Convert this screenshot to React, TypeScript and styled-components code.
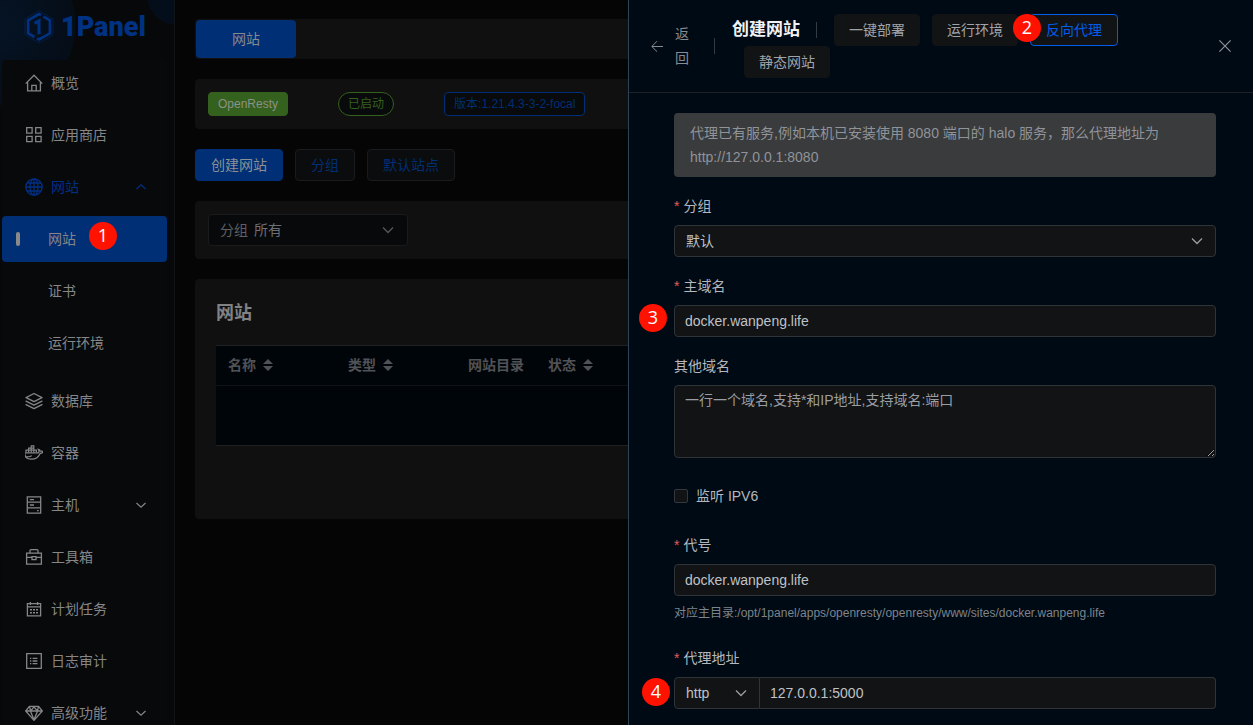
import React from "react";
import styled, { createGlobalStyle, css } from "styled-components";

const GlobalStyle = createGlobalStyle`
  *, *::before, *::after { box-sizing: border-box; }
  body {
    margin: 0;
    background: #050505;
    overflow: hidden;
  }
  body, button, input, select, textarea {
    font-family: "Liberation Sans", "Noto Sans CJK SC", sans-serif;
    font-size: 14px;
    line-height: 22px;
  }
  button { cursor: pointer; }
`;

const Page = styled.div`
  display: flex;
  height: 100vh;
  overflow: hidden;
`;

/* ---------- sidebar ---------- */

const Sidebar = styled.aside`
  flex: 0 0 175px;
  overflow: hidden;
  border-right: 1px solid #121417;
  background:
    radial-gradient(circle at 176px -4px, #040e1b 0 28px, transparent 29px),
    radial-gradient(circle at -5px 25px, #051426 0, #050d17 80px, transparent 81px),
    #070809;
`;

const Brand = styled.a`
  display: flex;
  align-items: center;
  gap: 7px;
  height: 60px;
  padding: 0 0 6px 24px;
  color: #003283;
  font-family: Roboto, "Liberation Sans", sans-serif;
  font-size: 27px;
  font-weight: 900;
  line-height: 32px;
  text-decoration: none;
`;

const Menu = styled.nav`
  display: flex;
  flex-direction: column;
  gap: 6px;
  margin: 0 7px 0 2px;
  background: #08090b;
  border-radius: 4px;
`;

const SubMenu = styled.div`
  display: flex;
  flex-direction: column;
  gap: 6px;
  margin-bottom: 6px;
`;

const MenuLink = styled.a<{ $open?: boolean }>`
  display: flex;
  align-items: center;
  gap: 8px;
  height: 46px;
  padding: 0 20px 0 23px;
  color: ${(p) => (p.$open ? "#002f84" : "#858687")};
  text-decoration: none;

  svg { flex: none; }
  span { flex: 1; }
`;

const SubLink = styled.a<{ $active?: boolean }>`
  position: relative;
  display: flex;
  align-items: center;
  height: 46px;
  padding-left: 46px;
  border-radius: 4px;
  color: #858687;
  text-decoration: none;

  ${(p) =>
    p.$active &&
    css`
      background: #002f75;
      &::before {
        content: "";
        position: absolute;
        left: 14px;
        width: 4px;
        height: 14px;
        border-radius: 2px;
        background: #8a8a8a;
      }
    `}
`;

const StepBadge = styled.span<{ $left: number; $top: number }>`
  position: absolute;
  left: ${(p) => p.$left}px;
  top: ${(p) => p.$top}px;
  z-index: 1;
  width: 28px;
  height: 28px;
  border-radius: 50%;
  background: #ff1200;
  color: #fff;
  font-family: "Open Sans", sans-serif;
  font-size: 18px;
  line-height: 27px;
  text-align: center;
`;

/* ---------- main area ---------- */

const Main = styled.main`
  flex: 1;
  display: flex;
  flex-direction: column;
  align-items: stretch;
  gap: 20px;
  min-width: 0;
  padding: 19px 20px;
`;

const TabBar = styled.div`
  display: flex;
  padding: 1px;
  border-radius: 4px;
  background: #101010;
`;

const MainTab = styled.button`
  width: 100px;
  height: 38px;
  border: 0;
  border-radius: 4px;
  background: #002f75;
  color: #878a90;
`;

const Card = styled.section`
  border-radius: 4px;
  background: #101010;
`;

const StatusCard = styled(Card)`
  display: flex;
  gap: 50px;
  padding: 13px;
`;

const Tag = styled.span<{ $tone: "solid" | "success" | "primary" }>`
  height: 24px;
  padding: 0 9px;
  border: 1px solid;
  border-radius: ${(p) => (p.$tone === "success" ? 12 : 4)}px;
  font-size: 12px;
  line-height: 22px;
  ${(p) =>
    p.$tone === "solid"
      ? "background: #34611d; border-color: #34611d; color: #8d9088;"
      : p.$tone === "success"
        ? "background: #080a0b; border-color: #34611d; color: #34611d;"
        : "background: #080a0b; border-color: #002f75; color: #002f75;"}
`;

const Actions = styled.div`
  display: flex;
  gap: 12px;
`;

const ActionButton = styled.button<{ $primary?: boolean }>`
  height: 32px;
  padding: 0 15px;
  border: 1px solid ${(p) => (p.$primary ? "#002f75" : "#1a1b1d")};
  border-radius: 4px;
  background: ${(p) => (p.$primary ? "#002f75" : "#0b0c0e")};
  color: ${(p) => (p.$primary ? "#8d9094" : "#002f75")};
`;

const FilterCard = styled(Card)`
  padding: 13px;
`;

const Filter = styled.div`
  position: relative;
  display: flex;
  align-items: center;
  gap: 6px;
  width: 200px;
  height: 32px;
  padding-left: 11px;
  border: 1px solid #1a1b1d;
  border-radius: 4px;
  background: #08090b;
  color: #5e6064;
`;

const TableCard = styled(Card)`
  padding: 22px 21px 73px;
`;

const CardTitle = styled.h2`
  margin: 0 0 20px;
  color: #808284;
  font-size: 18px;
  font-weight: 700;
  line-height: 24px;
`;

const Table = styled.table`
  width: 100%;
  table-layout: fixed;
  border-collapse: collapse;
  border-top: 1px solid #202122;
  border-bottom: 1px solid #202122;
  background: #000509;

  th {
    height: 40px;
    padding: 0 12px 2px;
    border-bottom: 1px solid #101214;
    color: #515256;
    font-size: 14px;
    font-weight: 700;
    line-height: 22px;
    text-align: left;
    white-space: nowrap;
  }
  th:nth-child(-n + 2) { width: 120px; }
  th:nth-child(3) { width: 80px; padding-right: 0; }
  th svg { margin-left: 7px; vertical-align: -1px; }
  td { height: 60px; padding: 0; }
`;

/* ---------- drawer ---------- */

const Drawer = styled.section`
  position: fixed;
  top: 0;
  right: 0;
  bottom: 0;
  width: round(down, 50%, 5px);
  overflow: hidden;
  border-left: 1px solid #2b4354;
  background: #000a14;
  color: #b4b8be;
`;

const DrawerHeader = styled.header`
  display: flex;
  align-items: center;
  padding: 14px 22px;
  border-bottom: 1px solid #1c2125;
`;

const BackButton = styled.button`
  display: flex;
  align-items: center;
  gap: 12px;
  padding: 0;
  border: 0;
  background: none;
  color: #878b90;
  line-height: 24px;

  span { width: 14px; }
`;

const Divider = styled.i<{ $title?: boolean }>`
  flex: none;
  width: 1px;
  height: 16px;
  margin: ${(p) => (p.$title ? "0 5px 0 16px" : "0 17px 0 25px")};
  background: #343b42;
`;

const HeaderContent = styled.div`
  flex: 1;
  display: flex;
  flex-wrap: wrap;
  align-items: center;
`;

const DrawerTitle = styled.h1`
  margin: 0;
  color: #f0f2f4;
  font-size: 17px;
  font-weight: 600;
  line-height: 28px;
`;

const TypeButton = styled.button<{ $active?: boolean }>`
  position: relative;
  height: 32px;
  margin-left: 12px;
  padding: 0 ${(p) => (p.$active ? 15 : 14)}px;
  border: 1px solid ${(p) => (p.$active ? "#005eeb" : "#111314")};
  border-radius: 4px;
  background: #111314;
  color: ${(p) => (p.$active ? "#005eeb" : "#a0a3a8")};
`;

const CloseButton = styled.button`
  display: flex;
  margin-left: 20px;
  padding: 0;
  border: 0;
  background: none;
  color: #8d9197;
`;

const Form = styled.form`
  display: flex;
  flex-direction: column;
  gap: 18px;
  padding: 20px 37px 20px 45px;
`;

const Alert = styled.p`
  margin: 0;
  padding: 8px 16px;
  border-radius: 4px;
  background: #393b3c;
  color: #909399;
  line-height: 24px;
`;

const Field = styled.div`
  display: flex;
  flex-direction: column;
  gap: 8px;
`;

const Label = styled.label<{ $required?: boolean }>`
  line-height: 22px;
  ${(p) =>
    p.$required &&
    css`
      &::before {
        content: "*";
        margin-right: 4px;
        color: #e05c5c;
      }
    `}
`;

const Control = styled.div`
  position: relative;
  display: flex;
`;

const field = css`
  width: 100%;
  min-width: 0;
  margin: 0;
  border: 1px solid #303438;
  border-radius: 4px;
  background: #111314;
  color: #bfc2c7;
  outline: none;
`;

const Input = styled.input<{ $joined?: boolean }>`
  ${field}
  height: 32px;
  padding: 0 10px;
  ${(p) =>
    p.$joined &&
    css`
      border-left: 0;
      border-radius: 0 4px 4px 0;
    `}
`;

const Textarea = styled.textarea`
  ${field}
  height: 73px;
  padding: 4px 10px;
  line-height: 21px;
  resize: vertical;
  color-scheme: dark;
  &::placeholder { color: #9a9ea4; }
`;

const Select = styled.select<{ $joined?: boolean }>`
  ${field}
  height: 32px;
  padding: 0 11px;
  appearance: none;
  ${(p) => p.$joined && "border-radius: 4px 0 0 4px;"}
`;

const FilterSelect = styled.select`
  flex: 1;
  height: 30px;
  padding: 0;
  border: 0;
  background: none;
  color: #6c6f74;
  appearance: none;
  outline: none;
`;

const SelectBox = styled.div<{ $compact?: boolean }>`
  position: relative;
  display: flex;
  flex: ${(p) => (p.$compact ? "0 0 86px" : "1")};
`;

const Caret = styled.svg`
  position: absolute;
  right: 13px;
  top: 50%;
  margin-top: -6px;
  pointer-events: none;
`;

const Hint = styled.small`
  margin-top: -8px;
  padding: 5px 0 4px;
  color: #7d848b;
  font-size: 12px;
  line-height: 24px;
`;

const CheckRow = styled.label`
  display: flex;
  align-items: center;
  gap: 8px;
  height: 40px;
`;

const Checkbox = styled.input`
  width: 14px;
  height: 14px;
  margin: 0;
  border: 1px solid #34383c;
  border-radius: 2px;
  background: #111314;
  appearance: none;
`;

/* ---------- icons ---------- */

const Icon = ({ children }: { children: React.ReactNode }) => (
  <svg width="18" height="18" viewBox="0 0 18 18" fill="none" stroke="currentColor" strokeWidth="1.3" aria-hidden="true">
    {children}
  </svg>
);

const Chevron = ({ up }: { up?: boolean }) => (
  <svg width="12" height="12" viewBox="0 0 12 12" fill="none" stroke="currentColor" strokeWidth="1.2" aria-hidden="true">
    <path d={up ? "M1.5 8 6 3.8 10.5 8" : "M1.5 4 6 8.2 10.5 4"} />
  </svg>
);

const SelectCaret = ({ color = "#9a9ea4" }: { color?: string }) => (
  <Caret width="12" height="12" viewBox="0 0 12 12" fill="none" stroke={color} strokeWidth="1.3" aria-hidden="true">
    <path d="M1 3.5 6 8.5 11 3.5" />
  </Caret>
);

const SortIcon = () => (
  <svg width="10" height="12" viewBox="0 0 10 12" fill="currentColor" aria-hidden="true">
    <path d="M0 5 5 0 10 5ZM0 7H10L5 12Z" />
  </svg>
);

const LogoMark = () => (
  <svg width="30" height="34" viewBox="0 0 30 34" fill="none" stroke="#003283" aria-hidden="true">
    <path d="M15 .8 29 8.8V24.8L15 32.8 1 24.8V8.8Z" strokeWidth="1" opacity=".4" />
    <path d="M17 5.2 15 4.1 4.1 10.3V23.3L10.5 27" strokeWidth="2.6" />
    <path d="M13 28.4 15 29.5 25.9 23.3V10.3L19.5 6.6" strokeWidth="2.6" />
    <path d="M10.5 13.4 15 10.8V24.2" strokeWidth="3" />
  </svg>
);

const icons = {
  home: (
    <Icon>
      <path d="M.7 9.6 9 1.2 17.3 9.6M2.6 8.2V16.8H15.4V8.2M6.8 16.5V11.3H11.2V16.5" />
    </Icon>
  ),
  apps: (
    <Icon>
      <path d="M1.7 1.7H7.1V7.1H1.7ZM10.7 1.7H16.1V7.1H10.7ZM1.7 10.3H7.1V15.7H1.7ZM10.7 10.3H16.1V15.7H10.7Z" />
    </Icon>
  ),
  globe: (
    <Icon>
      <circle cx="9" cy="9" r="8.2" />
      <ellipse cx="9" cy="9" rx="4" ry="8.2" />
      <path d="M9 .8V17.2M.8 9H17.2M2 5H16M2 13H16" />
    </Icon>
  ),
  layers: (
    <Icon>
      <path d="M9 1.5 17 5.6 9 9.7 1 5.6ZM1 9.2 9 13.2 17 9.2M1 12.6 9 16.6 17 12.6" strokeLinejoin="round" strokeLinecap="round" />
    </Icon>
  ),
  docker: (
    <Icon>
      <svg x="-1" y="0" width="20" height="18" viewBox="0 0 20 18" overflow="visible" strokeWidth="1.2">
        <path d="M.6 8.8H14.4C15.2 8 15 6.4 14.4 5.4 15.8 5.8 16.2 6.6 16.4 7.3 17.4 7 18.4 7.1 19.3 7.6 18.7 8.8 17.4 9.2 16.2 9.3 14.6 13.6 11.4 15.2 7.4 15.2 3 15.2.6 12.6.6 8.8Z" />
        <path d="M2 8.5V6.2H12.4V8.5M4.6 8.5V4.1H9.8V8.5M7.2 8.5V1.9H9.8V6M12.4 6.2H9.8M2.4 12.6C4.8 13 6.6 12.6 7.8 11.6" />
      </svg>
    </Icon>
  ),
  host: (
    <Icon>
      <path d="M2.3.8H15.7V17.2H2.3ZM2.3 6.2H15.7M2.3 11.8H15.7M4.8 3.6H9M4.8 9H9M12 14.6H13.8" />
    </Icon>
  ),
  toolbox: (
    <Icon>
      <path d="M1.6 5.2H16.4V16.2H1.6ZM5 5V2.6Q5 1.6 6 1.6H12Q13 1.6 13 2.6V5M1.6 9.4H7M11 9.4H16.4M7 8.6H11V11.6H7Z" />
    </Icon>
  ),
  calendar: (
    <Icon>
      <path d="M2.4 3.6H15.6V15.8H2.4ZM2.4 6.8H15.6M5.4 2V5M12.6 2V5" />
      <path d="M5 9.8H13M5 12.8H13" strokeDasharray="2 1" strokeWidth="1.6" />
    </Icon>
  ),
  log: (
    <Icon>
      <path d="M1.7 1.7H16.3V16.3H1.7ZM7.6 6.3H12.4M7.6 9H12.4M7.6 11.7H12.4M5 6.3H6.3M5 9H6.3M5 11.7H6.3" />
    </Icon>
  ),
  diamond: (
    <Icon>
      <path d="M4.4 2.4H13.6L17.3 7 9 16.4.7 7ZM.7 7H17.3M5.4 7 9 15.8 12.6 7M4.6 2.6 5.6 7 9 2.8 12.4 7 13.4 2.6" strokeLinejoin="round" />
    </Icon>
  ),
};

type IconName = keyof typeof icons;

const MenuItem = ({ icon, label, arrow, open }: { icon: IconName; label: string; arrow?: boolean; open?: boolean }) => (
  <MenuLink href="#" $open={open}>
    {icons[icon]}
    <span>{label}</span>
    {arrow && <Chevron up={open} />}
  </MenuLink>
);

export default function App() {
  return (
    <Page>
      <GlobalStyle />
      <Sidebar>
        <Brand href="#">
          <LogoMark />
          1Panel
        </Brand>
        <Menu>
          <MenuItem icon="home" label="概览" />
          <MenuItem icon="apps" label="应用商店" />
          <MenuItem icon="globe" label="网站" arrow open />
          <SubMenu>
            <SubLink href="#" $active>
              网站
              <StepBadge $left={87} $top={6}>1</StepBadge>
            </SubLink>
            <SubLink href="#">证书</SubLink>
            <SubLink href="#">运行环境</SubLink>
          </SubMenu>
          <MenuItem icon="layers" label="数据库" />
          <MenuItem icon="docker" label="容器" />
          <MenuItem icon="host" label="主机" arrow />
          <MenuItem icon="toolbox" label="工具箱" />
          <MenuItem icon="calendar" label="计划任务" />
          <MenuItem icon="log" label="日志审计" />
          <MenuItem icon="diamond" label="高级功能" arrow />
        </Menu>
      </Sidebar>

      <Main>
        <TabBar>
          <MainTab type="button">网站</MainTab>
        </TabBar>
        <StatusCard>
          <Tag $tone="solid">OpenResty</Tag>
          <Tag $tone="success">已启动</Tag>
          <Tag $tone="primary">版本:1.21.4.3-3-2-focal</Tag>
        </StatusCard>
        <Actions>
          <ActionButton type="button" $primary>创建网站</ActionButton>
          <ActionButton type="button">分组</ActionButton>
          <ActionButton type="button">默认站点</ActionButton>
        </Actions>
        <FilterCard>
          <Filter>
            <label htmlFor="filter-group">分组</label>
            <FilterSelect id="filter-group">
              <option>所有</option>
            </FilterSelect>
            <SelectCaret color="#55585c" />
          </Filter>
        </FilterCard>
        <TableCard>
          <CardTitle>网站</CardTitle>
          <Table>
            <thead>
              <tr>
                <th>名称<SortIcon /></th>
                <th>类型<SortIcon /></th>
                <th>网站目录</th>
                <th>状态<SortIcon /></th>
              </tr>
            </thead>
            <tbody>
              <tr>
                <td colSpan={4} />
              </tr>
            </tbody>
          </Table>
        </TableCard>
      </Main>

      <Drawer role="dialog" aria-labelledby="drawer-title">
        <DrawerHeader>
          <BackButton type="button">
            <svg width="12" height="12" viewBox="0 0 12 12" fill="none" stroke="currentColor" aria-hidden="true">
              <path d="M12 6.5H1M6 1.2.8 6.5 6 11.6" />
            </svg>
            <span>返回</span>
          </BackButton>
          <Divider />
          <HeaderContent>
            <DrawerTitle id="drawer-title">创建网站</DrawerTitle>
            <Divider $title />
            <TypeButton type="button">一键部署</TypeButton>
            <TypeButton type="button">运行环境</TypeButton>
            <TypeButton type="button" $active>
              <StepBadge $left={-18} $top={-1}>2</StepBadge>
              反向代理
            </TypeButton>
            <TypeButton type="button">静态网站</TypeButton>
          </HeaderContent>
          <CloseButton type="button" aria-label="关闭">
            <svg width="12" height="12" viewBox="0 0 12 12" fill="none" stroke="currentColor" strokeWidth="1.2" aria-hidden="true">
              <path d="M.4.4 11.6 11.6M11.6.4.4 11.6" />
            </svg>
          </CloseButton>
        </DrawerHeader>

        <Form>
          <Alert>
            代理已有服务,例如本机已安装使用 8080 端口的 halo 服务，那么代理地址为 http://127.0.0.1:8080
          </Alert>
          <Field>
            <Label htmlFor="group" $required>分组</Label>
            <Control>
              <SelectBox>
                <Select id="group">
                  <option>默认</option>
                </Select>
                <SelectCaret />
              </SelectBox>
            </Control>
          </Field>
          <Field>
            <Label htmlFor="domain" $required>主域名</Label>
            <Control>
              <StepBadge $left={-35} $top={-1}>3</StepBadge>
              <Input id="domain" defaultValue="docker.wanpeng.life" />
            </Control>
          </Field>
          <Field>
            <Label htmlFor="other-domains">其他域名</Label>
            <Textarea id="other-domains" placeholder="一行一个域名,支持*和IP地址,支持域名:端口" />
          </Field>
          <CheckRow>
            <Checkbox type="checkbox" />
            监听 IPV6
          </CheckRow>
          <Field>
            <Label htmlFor="alias" $required>代号</Label>
            <Input id="alias" defaultValue="docker.wanpeng.life" />
            <Hint>对应主目录:/opt/1panel/apps/openresty/openresty/www/sites/docker.wanpeng.life</Hint>
          </Field>
          <Field>
            <Label htmlFor="proxy" $required>代理地址</Label>
            <Control>
              <StepBadge $left={-32} $top={1}>4</StepBadge>
              <SelectBox $compact>
                <Select $joined aria-label="协议">
                  <option>http</option>
                </Select>
                <SelectCaret />
              </SelectBox>
              <Input id="proxy" $joined defaultValue="127.0.0.1:5000" />
            </Control>
          </Field>
        </Form>
      </Drawer>
    </Page>
  );
}
